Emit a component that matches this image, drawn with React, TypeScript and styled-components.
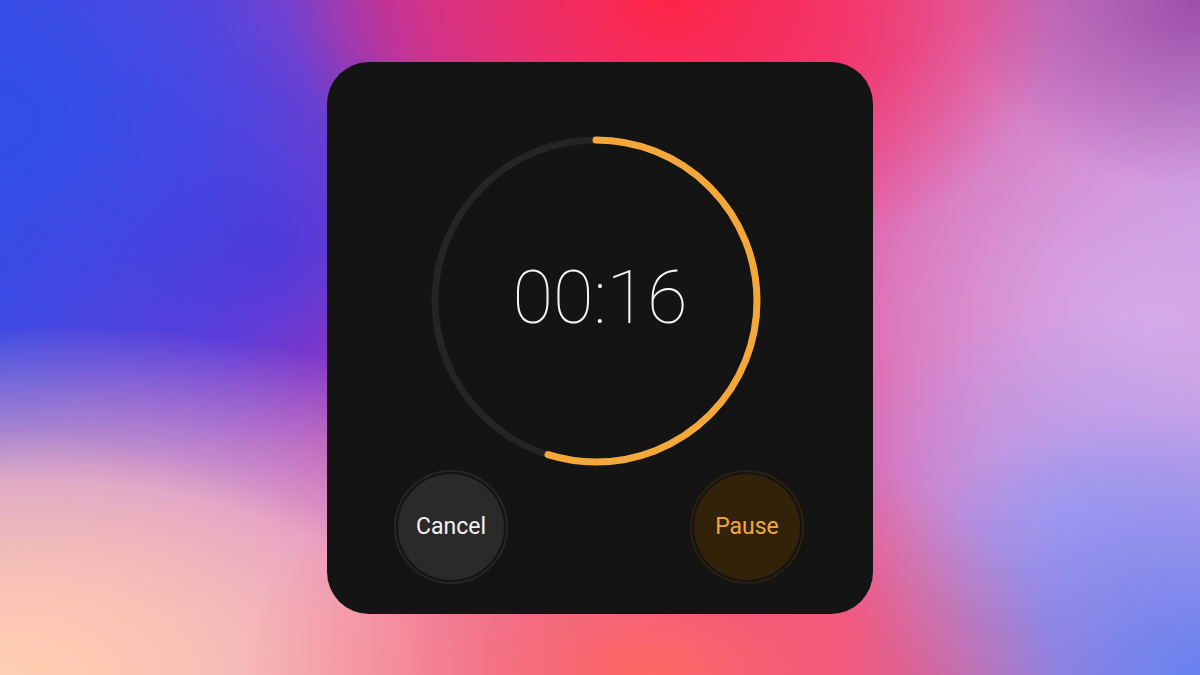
import React from 'react';
import styled, { createGlobalStyle } from 'styled-components';

const GlobalStyle = createGlobalStyle`
	html, body {
		margin: 0;
		padding: 0;
	}
	body {
		font-family: Roboto, 'Liberation Sans', sans-serif;
	}
`;

const SIZE = 330;
const RADIUS = 161;
const CIRC = 2 * Math.PI * RADIUS;

const App = () => {
	const progress = 0.548;
	return (
		<Wrapper>
			<GlobalStyle />
			<Card>
				<Dial>
					<svg width={SIZE} height={SIZE} viewBox={`0 0 ${SIZE} ${SIZE}`}>
						<circle cx={SIZE / 2} cy={SIZE / 2} r={RADIUS} fill="none" stroke="#252525" strokeWidth="7" />
						<circle
							cx={SIZE / 2}
							cy={SIZE / 2}
							r={RADIUS}
							fill="none"
							stroke="#f4a83a"
							strokeWidth="7"
							strokeLinecap="round"
							strokeDasharray={`${CIRC * progress} ${CIRC}`}
							transform={`rotate(-90 ${SIZE / 2} ${SIZE / 2})`}
						/>
					</svg>
					<Time>00:16</Time>
				</Dial>
				<Controls>
					<RoundButton $variant="cancel">Cancel</RoundButton>
					<RoundButton $variant="pause">Pause</RoundButton>
				</Controls>
			</Card>
		</Wrapper>
	);
};

const Wrapper = styled.div`
	display: flex;
	align-items: center;
	justify-content: center;
	width: 100%;
	height: 100vh;
	overflow: hidden;
	background:
		radial-gradient(ellipse 32% 42% at 56% 0%, rgba(255, 36, 70, 1) 0%, rgba(255, 36, 70, 0) 100%),
		radial-gradient(ellipse 34% 38% at 54% 100%, rgba(255, 104, 100, 1) 0%, rgba(255, 104, 100, 0) 100%),
		radial-gradient(ellipse 36% 36% at 0% 100%, rgba(255, 206, 178, 1) 0%, rgba(255, 206, 178, 0) 100%),
		radial-gradient(ellipse 55% 52% at 4% 100%, rgba(255, 184, 178, 1) 0%, rgba(252, 184, 196, 0.8) 55%, rgba(240, 180, 220, 0) 100%),
		radial-gradient(ellipse 30% 40% at 100% 100%, rgba(102, 130, 240, 1) 0%, rgba(102, 130, 240, 0) 100%),
		radial-gradient(ellipse 22% 30% at 90% 76%, rgba(176, 160, 240, 1) 0%, rgba(176, 160, 240, 0) 100%),
		radial-gradient(ellipse 20% 28% at 100% 0%, rgba(156, 78, 168, 1) 0%, rgba(156, 78, 168, 0) 100%),
		radial-gradient(ellipse 36% 50% at 96% 48%, rgba(214, 170, 232, 1) 0%, rgba(214, 170, 232, 0) 100%),
		radial-gradient(ellipse 38% 45% at 0% 18%, rgba(48, 78, 232, 1) 0%, rgba(48, 78, 232, 0) 100%),
		radial-gradient(ellipse 24% 32% at 22% 36%, rgba(84, 52, 216, 0.9) 0%, rgba(84, 52, 216, 0) 100%),
		linear-gradient(90deg, #4048e0 0%, #6e40d8 18%, #b438b0 32%, #e64c96 70%, #c890d8 100%);
`;

const Card = styled.div`
	display: flex;
	flex-direction: column;
	align-items: center;
	box-sizing: border-box;
	width: 546px;
	height: 552px;
	padding-top: 74px;
	background: #141414;
	border-radius: 42px;
`;

const Dial = styled.div`
	display: grid;
	place-items: center;
	width: ${SIZE}px;
	height: ${SIZE}px;
	margin-right: 8px;

	& > * {
		grid-area: 1 / 1;
	}
`;

const Time = styled.div`
	margin: -6px 0 0 8px;
	font-size: 74px;
	font-weight: 100;
	line-height: 1;
	color: #f4f4f4;
`;

const Controls = styled.div`
	display: flex;
	justify-content: space-between;
	box-sizing: border-box;
	width: 100%;
	margin-top: 4px;
	padding: 0 69px 0 67px;
`;

const RoundButton = styled.button<{ $variant: 'cancel' | 'pause' }>`
	display: flex;
	align-items: center;
	justify-content: center;
	box-sizing: border-box;
	width: 114px;
	height: 114px;
	padding: 2px;
	border-radius: 50%;
	border: 2px solid ${(p) => (p.$variant === 'pause' ? '#2b210f' : '#262626')};
	background: ${(p) => (p.$variant === 'pause' ? '#33220a' : '#2a2a2b')};
	background-clip: content-box;
	font-family: Roboto, 'Liberation Sans', sans-serif;
	font-size: 23px;
	color: ${(p) => (p.$variant === 'pause' ? '#f2a83a' : '#f2f2f2')};
	cursor: pointer;
`;

export default App;
